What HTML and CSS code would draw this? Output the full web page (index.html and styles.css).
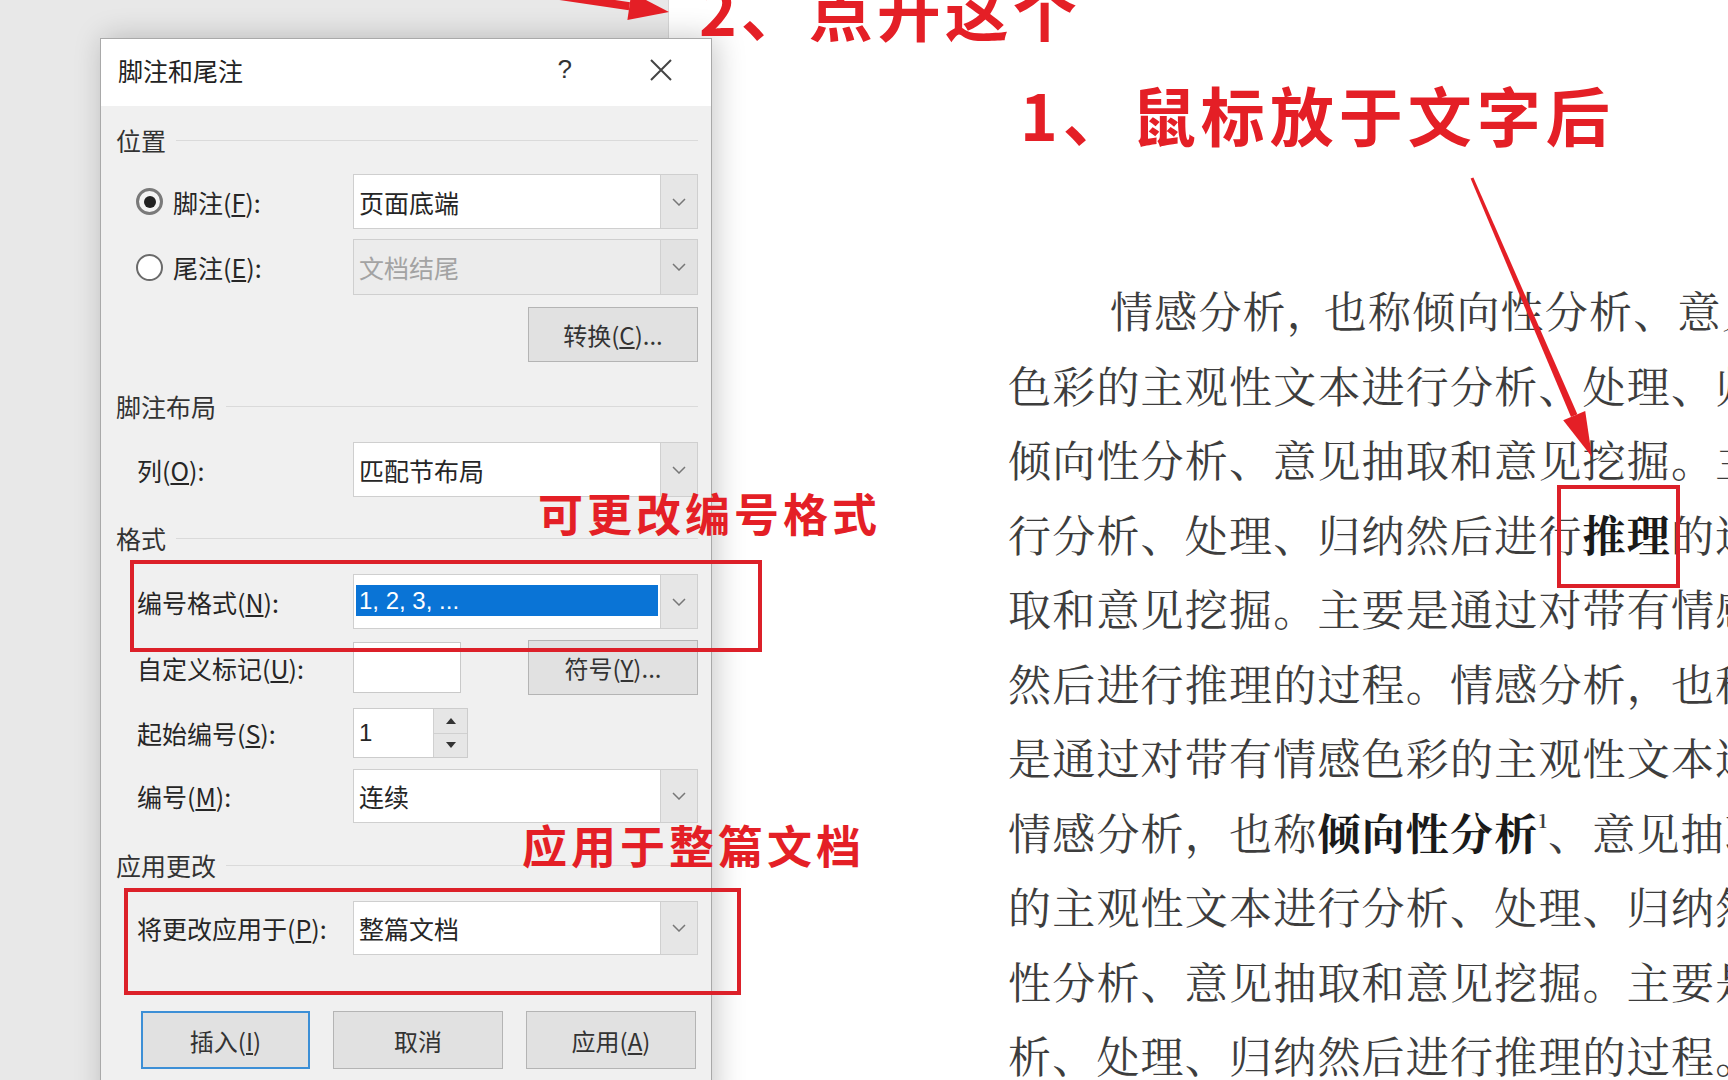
FILE: index.html
```html
<!DOCTYPE html>
<html lang="zh-CN">
<head>
<meta charset="utf-8">
<title>脚注和尾注</title>
<link rel="stylesheet" href="styles.css">
</head>
<body>
<div class="screen">
  <div class="desk"></div>
  <div class="page">
    <div class="line first">情感分析<span class="tight">，</span>也称倾向性分析、意见抽取和意见挖掘。</div>
    <div class="line">色彩的主观性文本进行分析、处理、归纳然后进行</div>
    <div class="line">倾向性分析、意见抽取和意见挖掘。主要是通过对</div>
    <div class="line">行分析、处理、归纳然后进行<b>推理</b>的过程。情感</div>
    <div class="line">取和意见挖掘。主要是通过对带有情感色彩的主观</div>
    <div class="line">然后进行推理的过程。情感分析，也称倾向性分析</div>
    <div class="line">是通过对带有情感色彩的主观性文本进行分析、处理</div>
    <div class="line">情感分析，也称<b>倾向性分析</b><sup>1</sup>、意见抽取和意见</div>
    <div class="line">的主观性文本进行分析、处理、归纳然后进行推理</div>
    <div class="line">性分析、意见抽取和意见挖掘。主要是通过对带有</div>
    <div class="line">析、处理、归纳然后进行推理的过程。</div>
  </div>

  <div class="dialog">
    <div class="titlebar">
      <span class="title">脚注和尾注</span>
      <span class="help">?</span>
      <svg class="close" width="24" height="24" viewBox="0 0 24 24"><path d="M2 2 L22 22 M22 2 L2 22" stroke="#444" stroke-width="2" fill="none"/></svg>
    </div>
    <div class="body">
      <div class="group g1"><span>位置</span><i></i></div>
      <div class="row r1">
        <label class="rlabel"><span class="radio on"></span>脚注(<u>F</u>):</label>
        <div class="combo"><span class="val">页面底端</span><span class="drop"><svg width="14" height="8" viewBox="0 0 14 8"><path d="M1 1 L7 7 L13 1" stroke="#777" stroke-width="1.5" fill="none"/></svg></span></div>
      </div>
      <div class="row r2">
        <label class="rlabel"><span class="radio"></span>尾注(<u>E</u>):</label>
        <div class="combo disabled"><span class="val">文档结尾</span><span class="drop"><svg width="14" height="8" viewBox="0 0 14 8"><path d="M1 1 L7 7 L13 1" stroke="#777" stroke-width="1.5" fill="none"/></svg></span></div>
      </div>
      <div class="row r3">
        <span class="label"></span>
        <div class="ctrl end"><button class="btn">转换(<u>C</u>)...</button></div>
      </div>

      <div class="group g2"><span>脚注布局</span><i></i></div>
      <div class="row r4">
        <label class="label">列(<u>O</u>):</label>
        <div class="combo"><span class="val">匹配节布局</span><span class="drop"><svg width="14" height="8" viewBox="0 0 14 8"><path d="M1 1 L7 7 L13 1" stroke="#777" stroke-width="1.5" fill="none"/></svg></span></div>
      </div>

      <div class="group g3"><span>格式</span><i></i></div>
      <div class="row r5">
        <label class="label">编号格式(<u>N</u>):</label>
        <div class="combo"><span class="val sel">1, 2, 3, ...</span><span class="drop"><svg width="14" height="8" viewBox="0 0 14 8"><path d="M1 1 L7 7 L13 1" stroke="#777" stroke-width="1.5" fill="none"/></svg></span></div>
      </div>
      <div class="row r6">
        <label class="label">自定义标记(<u>U</u>):</label>
        <div class="ctrl split"><span class="input short"></span><button class="btn">符号(<u>Y</u>)...</button></div>
      </div>
      <div class="row r7">
        <label class="label">起始编号(<u>S</u>):</label>
        <div class="ctrl"><div class="spin"><span class="sval">1</span><span class="arrows"><span class="up"><svg width="10" height="6" viewBox="0 0 10 6"><path d="M0 6 L5 0 L10 6 Z" fill="#333"/></svg></span><span class="dn"><svg width="10" height="6" viewBox="0 0 10 6"><path d="M0 0 L5 6 L10 0 Z" fill="#333"/></svg></span></span></div></div>
      </div>
      <div class="row r8">
        <label class="label">编号(<u>M</u>):</label>
        <div class="combo"><span class="val">连续</span><span class="drop"><svg width="14" height="8" viewBox="0 0 14 8"><path d="M1 1 L7 7 L13 1" stroke="#777" stroke-width="1.5" fill="none"/></svg></span></div>
      </div>

      <div class="group g4"><span>应用更改</span><i></i></div>
      <div class="row r9">
        <label class="label">将更改应用于(<u>P</u>):</label>
        <div class="combo"><span class="val">整篇文档</span><span class="drop"><svg width="14" height="8" viewBox="0 0 14 8"><path d="M1 1 L7 7 L13 1" stroke="#777" stroke-width="1.5" fill="none"/></svg></span></div>
      </div>

      <div class="buttons">
        <button class="btn primary">插入(<u>I</u>)</button>
        <button class="btn">取消</button>
        <button class="btn">应用(<u>A</u>)</button>
      </div>
    </div>
  </div>

  <div class="redbox box1"></div>
  <div class="redbox box2"></div>
  <div class="redbox box3"></div>

  <div class="note n1">1、鼠标放于文字后</div>
  <div class="note n2">2、点开这个</div>
  <div class="note n3">可更改编号格式</div>
  <div class="note n4">应用于整篇文档</div>

  <svg class="arrows-layer" width="1728" height="1080" viewBox="0 0 1728 1080">
    <polygon fill="#e41f26" points="1470.6,178.6 1473.4,177.4 1577.4,414.2 1571.0,417.0"/>
    <polygon fill="#e41f26" points="1592,457 1563.2,420.3 1585.2,410.9"/>
    <polygon fill="#e41f26" points="560.6,-8 630,2.2 628.8,10.2 559.4,0"/>
    <polygon fill="#e41f26" points="669,12 627.4,20 631.4,-7.6"/>
  </svg>
</div>
</body>
</html>
```
FILE: styles.css
```css
* { box-sizing: border-box; }
html, body { margin: 0; padding: 0; }
body {
  width: 1728px;
  height: 1080px;
  overflow: hidden;
  font-family: "Noto Sans CJK SC", "Noto Sans", sans-serif;
}
.screen {
  position: relative;
  width: 1728px;
  height: 1080px;
  display: flex;
  overflow: hidden;
}
.desk {
  width: 669px;
  flex: none;
  background: #e8e8e8;
  border-right: 1px solid #d6d6d6;
}
.page {
  flex: 1;
  background: #fff;
  padding: 273px 0 0 339px;
  overflow: hidden;
  font-family: "Noto Serif CJK SC", "Source Han Serif SC", "AR PL UMing CN", "Noto Sans CJK SC", serif;
  font-size: 43px;
  letter-spacing: 1.2px;
  color: #3d3d3d;
}
.line {
  height: 74.5px;
  line-height: 74.5px;
  white-space: nowrap;
}
.line.first { padding-left: 102px; }
.line .tight { letter-spacing: -6px; }
.line b { font-weight: 700; color: #1a1a1a; }
.line sup { font-size: 18px; line-height: 0; vertical-align: 22px; font-weight: 700; }

/* dialog */
.dialog {
  position: absolute;
  left: 100px;
  top: 38px;
  width: 612px;
  height: 1070px;
  background: #f0f0f0;
  border: 1px solid #a9a9a9;
  box-shadow: 4px 0 28px rgba(0,0,0,0.22);
  color: #262626;
  font-size: 25px;
}
.titlebar {
  height: 67px;
  background: #fff;
  display: flex;
  align-items: center;
  padding: 0 38px 6px 17px;
}
.title { font-size: 25px; color: #222; flex: 1; }
.help { font-size: 26px; color: #333; margin-right: 77px; font-family: "Liberation Sans", sans-serif; }
.close { display: block; }

.body { padding: 0 13px 0 0; display: flex; flex-direction: column; }
.group {
  height: 34px;
  display: flex;
  align-items: center;
  padding-left: 15px;
  color: #333;
}
.group i { flex: 1; height: 1px; background: #dadada; margin-left: 10px; }
.g1 { margin-top: 17px; }
.g2 { margin-top: 27px; }
.g3 { margin-top: 24px; }
.g4 { margin-top: 25px; }

.row {
  display: grid;
  grid-template-columns: 252px 345px;
  align-items: center;
}
.row .label { padding-left: 36px; white-space: nowrap; }
.rlabel { display: flex; align-items: center; padding-left: 35px; white-space: nowrap; }
.radio {
  width: 27px; height: 27px;
  border-radius: 50%;
  border: 2px solid #6a6a6a;
  background: #fff;
  margin-right: 10px;
  flex: none;
  display: flex; align-items: center; justify-content: center;
}
.radio.on { border: 3px solid #7a7a7a; background: #f4f4f4; }
.radio.on::after { content: ""; width: 12px; height: 12px; border-radius: 50%; background: #222; }

.r1 { margin-top: 17px; height: 55px; }
.r2 { margin-top: 10px; height: 56px; }
.r3 { margin-top: 12px; height: 55px; }
.r4 { margin-top: 19px; height: 55px; }
.r5 { margin-top: 19px; height: 55px; }
.r6 { margin-top: 11px; height: 55px; }
.r7 { margin-top: 13px; height: 50px; }
.r8 { margin-top: 11px; height: 54px; }
.r9 { margin-top: 19px; height: 54px; }

.combo {
  height: 100%;
  display: flex;
  background: #fff;
  border: 1px solid #cfcfcf;
}
.combo .val {
  flex: 1;
  display: flex;
  align-items: center;
  padding-left: 5px;
  white-space: nowrap;
}
.combo .val.sel {
  margin: 10px 2px 12px 2px;
  padding-left: 3px;
  background: #0a74d6;
  color: #fff;
  font-family: "Liberation Sans", sans-serif;
  font-size: 24px;
}
.combo .drop {
  width: 37px;
  flex: none;
  background: #e6e6e6;
  border-left: 1px solid #d0d0d0;
  display: flex;
  align-items: center;
  justify-content: center;
}
.combo.disabled { background: #ececec; color: #a3a3a3; }
.combo.disabled .drop { background: #e2e2e2; }

.ctrl { height: 100%; display: flex; align-items: center; }
.ctrl.end { justify-content: flex-end; }
.ctrl.split { justify-content: space-between; }

.btn {
  height: 55px;
  width: 170px;
  background: #e1e1e1;
  border: 1px solid #b4b4b4;
  font-family: "Noto Sans CJK SC", sans-serif;
  font-size: 24px;
  color: #333;
  padding: 0;
}
.input.short {
  width: 108px;
  height: 51px;
  background: #fff;
  border: 1px solid #c9c9c9;
}
.spin {
  width: 115px;
  height: 50px;
  display: flex;
  border: 1px solid #cccccc;
  background: #fff;
}
.sval { flex: 1; padding-left: 5px; display: flex; align-items: center; font-family: "Liberation Sans", sans-serif; font-size: 24px; }
.arrows { width: 34px; display: flex; flex-direction: column; background: #e6e6e6; border-left: 1px solid #d0d0d0; }
.arrows span { flex: 1; display: flex; align-items: center; justify-content: center; }
.arrows .up { border-bottom: 1px solid #d0d0d0; }

.buttons {
  margin-top: 56px;
  display: flex;
  gap: 23px;
  padding-left: 40px;
}
.buttons .btn { height: 58px; width: 170px; }
.buttons .btn.primary { border: 2px solid #3c8fd6; width: 169px; }

/* annotations */
.redbox {
  position: absolute;
  border: 4px solid #dc2029;
}
.box1 { left: 130px; top: 560px; width: 632px; height: 92px; }
.box2 { left: 124px; top: 888px; width: 617px; height: 107px; }
.box3 { left: 1557px; top: 485px; width: 123px; height: 103px; }

.note {
  position: absolute;
  color: #e41f26;
  font-weight: 700;
  white-space: nowrap;
  font-family: "Noto Sans CJK SC", sans-serif;
}
.n1 { left: 1020px; top: 78px; font-size: 64px; line-height: 70px; letter-spacing: 5px; }
.n2 { left: 699px; top: -27px; font-size: 64px; line-height: 70px; letter-spacing: 4px; }
.n3 { left: 538px; top: 486px; font-size: 45px; line-height: 54px; letter-spacing: 4px; }
.n4 { left: 522px; top: 818px; font-size: 45px; line-height: 54px; letter-spacing: 4px; }

.arrows-layer { position: absolute; left: 0; top: 0; pointer-events: none; }
```
